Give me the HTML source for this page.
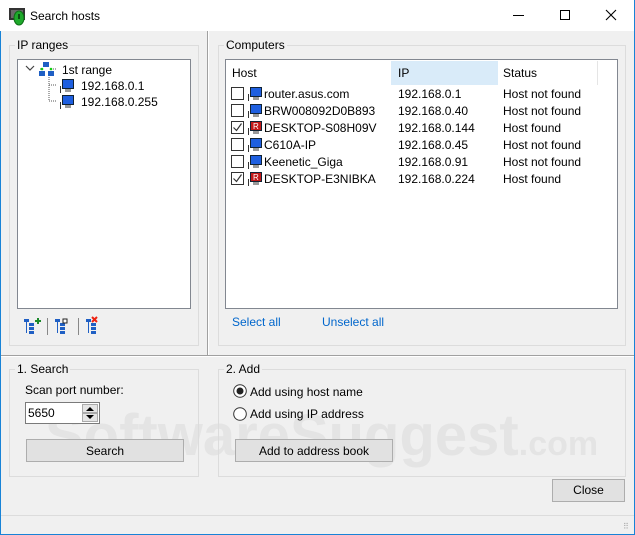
<!DOCTYPE html>
<html><head><meta charset="utf-8"><style>
*{box-sizing:border-box;margin:0;padding:0}
body{width:635px;height:535px;position:relative;overflow:hidden;background:#f0f0f0;font-family:"Liberation Sans",sans-serif;font-size:12px;color:#000}
.a{position:absolute}
.grp{position:absolute;border:1px solid #dcdcdc}
.lg{position:absolute;background:#f0f0f0;padding:0 2px;top:-8px;left:5px;line-height:14px}
.white{position:absolute;background:#fff;border:1px solid #828790}
.btn{position:absolute;background:#e1e1e1;border:1px solid #adadad;text-align:center;line-height:21px}
.t{position:absolute;white-space:nowrap;line-height:14px}
.cb{position:absolute;width:13px;height:13px;border:1px solid #333;background:#fff}
.mon{position:absolute;width:16px;height:16px}
.lnk{color:#0066cc}
</style></head><body>
<div class="a" style="left:0;top:0;width:635px;height:31px;background:#fff"></div>
<svg class="a" style="left:8px;top:6px" width="20" height="20"><rect x="1" y="2" width="16" height="12" fill="#333"/><rect x="3" y="4" width="12" height="8" fill="#6a6a6a"/><ellipse cx="11" cy="12" rx="5" ry="7" fill="#1faa2c" stroke="#0d6e16"/><rect x="10" y="8" width="2" height="5" fill="#0b5012"/></svg>
<div class="t" style="left:30px;top:9px;font-size:12px">Search hosts</div>
<div class="a" style="left:513px;top:15px;width:11px;height:1px;background:#000"></div>
<div class="a" style="left:560px;top:10px;width:10px;height:10px;border:1px solid #000"></div>
<svg class="a" style="left:605px;top:9px" width="12" height="12"><path d="M1 1L11 11M11 1L1 11" stroke="#000" stroke-width="1.1"/></svg>
<div class="a" style="left:0;top:31px;width:1px;height:504px;background:#1883d7"></div>
<div class="a" style="left:634px;top:0;width:1px;height:535px;background:#1883d7"></div>
<div class="a" style="left:0;top:534px;width:635px;height:1px;background:#1883d7"></div>
<div class="a" style="left:207px;top:31px;width:1px;height:324px;background:#a0a0a0"></div>
<div class="a" style="left:208px;top:31px;width:1px;height:324px;background:#fff"></div>
<div class="a" style="left:1px;top:355px;width:633px;height:1px;background:#a0a0a0"></div>
<div class="a" style="left:1px;top:356px;width:633px;height:1px;background:#fff"></div>
<!-- watermark -->
<div class="t" style="left:45px;top:405px;font-size:58px;line-height:62px;font-weight:bold;color:rgba(205,205,205,0.35)">SoftwareSuggest<span style="font-size:34px">.com</span></div>
<div class="grp" style="left:9px;top:45px;width:190px;height:301px"><div class="lg">IP ranges</div></div>
<div class="white" style="left:17px;top:59px;width:174px;height:250px"></div>
<svg class="a" style="left:24px;top:61px" width="60" height="48"><path d="M2 5l4 4 4-4" fill="none" stroke="#444" stroke-width="1.2"/><path d="M25 12v28M25 24h8M25 40h8M16 8h4M29 8h4" stroke="#555" stroke-dasharray="1 1"/>
<rect x="19" y="1" width="6" height="5" fill="#1f5fc4"/><rect x="15" y="10" width="6" height="5" fill="#1f5fc4"/><rect x="24" y="10" width="6" height="5" fill="#1f5fc4"/><circle cx="18" cy="8" r="1.3" fill="#1c1"/><circle cx="27" cy="8" r="1.3" fill="#1c1"/></svg>
<div class="t" style="left:62px;top:63px">1st range</div>
<svg class="mon" style="left:59px;top:78px"><rect x="1" y="8" width="1" height="7" fill="#333"/><rect x="3" y="1" width="12" height="10" fill="#123"/><rect x="4" y="2" width="10" height="8" fill="#1e5fe0"/><rect x="6" y="11" width="6" height="3" fill="#999"/></svg>
<div class="t" style="left:81px;top:79px">192.168.0.1</div>
<svg class="mon" style="left:59px;top:94px"><rect x="1" y="8" width="1" height="7" fill="#333"/><rect x="3" y="1" width="12" height="10" fill="#123"/><rect x="4" y="2" width="10" height="8" fill="#1e5fe0"/><rect x="6" y="11" width="6" height="3" fill="#999"/></svg>
<div class="t" style="left:81px;top:95px">192.168.0.255</div>
<svg class="a" style="left:24px;top:316px" width="80" height="20"><g fill="#1f5fc4"><rect x="0" y="3" width="5" height="3"/><rect x="5" y="7" width="5" height="3"/><rect x="5" y="11" width="5" height="3"/><rect x="5" y="15" width="5" height="3"/><rect x="2" y="5" width="1" height="12"/>
<rect x="31" y="3" width="5" height="3"/><rect x="36" y="7" width="5" height="3"/><rect x="36" y="11" width="5" height="3"/><rect x="36" y="15" width="5" height="3"/><rect x="33" y="5" width="1" height="12"/>
<rect x="62" y="3" width="5" height="3"/><rect x="67" y="7" width="5" height="3"/><rect x="67" y="11" width="5" height="3"/><rect x="67" y="15" width="5" height="3"/><rect x="64" y="5" width="1" height="12"/></g>
<path d="M14 2v6M11 5h6" stroke="#1b8a2a" stroke-width="2"/><rect x="39" y="3" width="4" height="4" fill="#fff" stroke="#222"/><path d="M68 1l5 5M73 1l-5 5" stroke="#e21" stroke-width="2"/>
<rect x="23" y="2" width="1" height="17" fill="#888"/><rect x="54" y="2" width="1" height="17" fill="#888"/></svg>
<div class="grp" style="left:218px;top:45px;width:408px;height:301px"><div class="lg">Computers</div></div>
<div class="white" style="left:225px;top:59px;width:393px;height:250px"></div>
<div class="a" style="left:391px;top:61px;width:107px;height:24px;background:#d9ebf9"></div>
<div class="a" style="left:597px;top:61px;width:1px;height:24px;background:#e5e5e5"></div>
<div class="t" style="left:232px;top:66px">Host</div>
<div class="t" style="left:398px;top:66px">IP</div>
<div class="t" style="left:503px;top:66px">Status</div>
<div id="rows"></div>
<div class="t lnk" style="left:232px;top:315px">Select all</div>
<div class="t lnk" style="left:322px;top:315px">Unselect all</div>
<div class="grp" style="left:9px;top:369px;width:190px;height:108px"><div class="lg">1. Search</div></div>
<div class="t" style="left:25px;top:383px">Scan port number:</div>
<div class="a" style="left:25px;top:402px;width:75px;height:22px;background:#fff;border:1px solid #7a7a7a"></div>
<div class="t" style="left:28px;top:406px">5650</div>
<svg class="a" style="left:82px;top:404px" width="16" height="18"><rect x="0.5" y="0.5" width="15" height="8" fill="#e5e5e5" stroke="#aaa"/><rect x="0.5" y="9.5" width="15" height="8" fill="#e5e5e5" stroke="#aaa"/><path d="M4 7l4-4 4 4z M4 11l4 4 4-4z" fill="#000"/></svg>
<div class="btn" style="left:26px;top:439px;width:158px;height:23px;line-height:22px">Search</div>
<div class="grp" style="left:218px;top:369px;width:408px;height:108px"><div class="lg">2. Add</div></div>
<svg class="a" style="left:233px;top:384px" width="14" height="14"><circle cx="7" cy="7" r="6.3" fill="#fff" stroke="#333"/><circle cx="7" cy="7" r="3.5" fill="#222"/></svg>
<div class="t" style="left:250px;top:385px">Add using host name</div>
<svg class="a" style="left:233px;top:407px" width="14" height="14"><circle cx="7" cy="7" r="6.3" fill="#fff" stroke="#333"/></svg>
<div class="t" style="left:250px;top:407px">Add using IP address</div>
<div class="btn" style="left:235px;top:439px;width:158px;height:23px;line-height:22px">Add to address book</div>
<div class="btn" style="left:552px;top:479px;width:73px;height:23px">Close</div>
<div class="a" style="left:1px;top:515px;width:633px;height:1px;background:#dcdcdc"></div>
<div class="t" style="left:623px;top:520px;font-size:8px;color:#aaa">⠿</div>
<script>
var d=[["router.asus.com","192.168.0.1","Host not found",0],["BRW008092D0B893","192.168.0.40","Host not found",0],["DESKTOP-S08H09V","192.168.0.144","Host found",1],["C610A-IP","192.168.0.45","Host not found",0],["Keenetic_Giga","192.168.0.91","Host not found",0],["DESKTOP-E3NIBKA","192.168.0.224","Host found",1]];
var h="";d.forEach(function(r,i){var y=86+i*17;
h+='<div class="cb" style="left:231px;top:'+(y+1)+'px">'+(r[3]?'<svg width="11" height="11" style="position:absolute;left:0;top:0"><path d="M1.5 5.5l3 3 5-7" fill="none" stroke="#333" stroke-width="1.2"/></svg>':'')+'</div>';
h+='<svg class="mon" style="left:247px;top:'+y+'px"><rect x="1" y="8" width="1" height="7" fill="#333"/><rect x="3" y="1" width="12" height="10" fill="#123"/><rect x="4" y="2" width="10" height="8" fill="'+(r[3]?'#c21a1a':'#1e5fe0')+'"/>'+(r[3]?'<text x="6" y="9" font-size="8" fill="#fff" font-family="Liberation Sans">R</text>':'')+'<rect x="6" y="11" width="6" height="3" fill="#999"/></svg>';
h+='<div class="t" style="left:264px;top:'+(y+1)+'px">'+r[0]+'</div><div class="t" style="left:398px;top:'+(y+1)+'px">'+r[1]+'</div><div class="t" style="left:503px;top:'+(y+1)+'px">'+r[2]+'</div>';});
document.getElementById("rows").innerHTML=h;
</script>
</body></html>
